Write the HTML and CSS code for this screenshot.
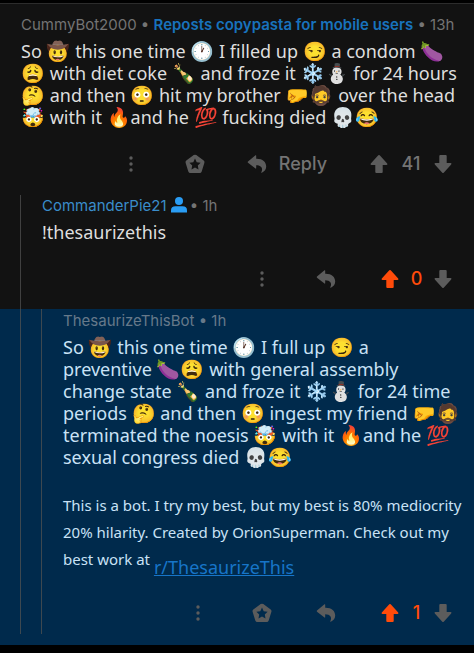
FILE: index.html
```html
<!DOCTYPE html>
<html lang="en">
<head>
<meta charset="utf-8">
<meta name="viewport" content="width=device-width, initial-scale=1">
<title>Comments</title>
<link rel="stylesheet" href="styles.css">
</head>
<body>
<svg class="defs" aria-hidden="true">
  <symbol id="dots" viewBox="0 0 20 20"><circle cx="10" cy="4" r="1.7"/><circle cx="10" cy="10" r="1.7"/><circle cx="10" cy="16" r="1.7"/></symbol>
  <symbol id="award" viewBox="0 0 20 20"><path fill-rule="evenodd" d="M8.7 1.1Q10 .3 11.3 1.1L18.7 6.500Q19.800 7.400 19.400 8.700L16.700 17.400Q16.200 19 14.600 19H5.400Q3.800 19 3.300 17.400L.6 8.700Q.2 7.400 1.300 6.500ZM10 4.600L8.300 8.200L4.400 8.700L7.200 11.500L6.500 15.500L10 13.600L13.500 15.500L12.800 11.500L15.600 8.700L11.700 8.200Z"/></symbol>
  <symbol id="reply" viewBox="0 0 20 20"><path d="M1 7.600L8.500 1.300Q9.200 .8 9.200 1.800V4.800C15.500 4.600 19.200 8 19.200 12.600C19.200 15.300 17.600 17.700 14.800 18.700Q13.900 18.900 14.400 18C16.200 14.300 14.300 11.200 9.200 11.200V14Q9.200 15 8.500 14.500L1 8.700Q.4 8.200 1 7.600Z"/></symbol>
  <symbol id="up" viewBox="0 0 20 20"><path d="M9.300 1.300Q10 .6 10.700 1.300L18.200 9.600Q19 11 17.600 11H13.700V18Q13.700 19 12.700 19H7.300Q6.300 19 6.300 18V11H2.400Q1 11 1.800 9.600Z"/></symbol>
  <symbol id="down" viewBox="0 0 20 20"><path d="M9.300 18.700Q10 19.400 10.700 18.700L18.200 10.400Q19 9 17.600 9H13.700V2Q13.700 1 12.700 1H7.300Q6.300 1 6.300 2V9H2.400Q1 9 1.800 10.400Z"/></symbol>
  <symbol id="person" viewBox="0 0 16 16"><circle cx="8" cy="4" r="4"/><path d="M0 15.500V13.500Q0 9.300 4.500 9.300H11.500Q16 9.300 16 13.500V15.500Z"/></symbol>
</svg>
<main>
  <article class="comment root">
    <div class="content">
      <header class="meta">CummyBot2000 • <b class="flair">Reposts copypasta for mobile users</b> • 13h</header>
      <p class="text">So <i>🤠</i> this one time <i>🕐</i> I filled up <i>😏</i> a condom <i>🍆</i><br><i>😩</i> with diet coke <i>🍾</i> and froze it <i>❄️⛄</i> for 24 hours<br><i>🤔</i> and then <i>😳</i> hit my brother <i>🤛🧔</i> over the head<br><i>🤯</i> with it <i>🔥</i>and he <i>💯</i> fucking died <i>💀😂</i></p>
      <footer class="actions">
        <button type="button" aria-label="More"><svg><use href="#dots"/></svg></button>
        <button type="button" aria-label="Award"><svg><use href="#award"/></svg></button>
        <button type="button" class="labelled"><svg><use href="#reply"/></svg>Reply</button>
        <div class="votes">
          <button type="button" aria-label="Upvote"><svg><use href="#up"/></svg></button>
          <span class="score">41</span>
          <button type="button" aria-label="Downvote"><svg><use href="#down"/></svg></button>
        </div>
      </footer>
    </div>
  </article>

  <article class="comment child">
    <div class="rail"></div>
    <div class="content">
      <header class="meta"><span class="op">CommanderPie21</span> <svg class="person"><use href="#person"/></svg>• 1h</header>
      <p class="text">!thesaurizethis</p>
      <footer class="actions">
        <button type="button" aria-label="More"><svg><use href="#dots"/></svg></button>
        <button type="button" aria-label="Reply"><svg><use href="#reply"/></svg></button>
        <div class="votes voted">
          <button type="button" aria-label="Upvote" aria-pressed="true"><svg><use href="#up"/></svg></button>
          <span class="score">0</span>
          <button type="button" aria-label="Downvote"><svg><use href="#down"/></svg></button>
        </div>
      </footer>
    </div>
  </article>

  <article class="comment highlighted">
    <div class="rail"></div>
    <div class="rail"></div>
    <div class="content">
      <header class="meta">ThesaurizeThisBot • 1h</header>
      <p class="text">So <i>🤠</i> this one time <i>🕐</i> I full up <i>😏</i> a<br>preventive <i>🍆😩</i> with general assembly<br>change state <i>🍾</i> and froze it <i>❄️⛄</i> for 24 time<br>periods <i>🤔</i> and then <i>😳</i> ingest my friend <i>🤛🧔</i><br>terminated the noesis <i>🤯</i> with it <i>🔥</i>and he <i>💯</i><br>sexual congress died <i>💀😂</i></p>
      <p class="note">This is a bot. I try my best, but my best is 80% mediocrity<br>20% hilarity. Created by OrionSuperman. Check out my<br>best work at <a href="#thesaurize">r/ThesaurizeThis</a></p>
      <footer class="actions">
        <button type="button" aria-label="More"><svg><use href="#dots"/></svg></button>
        <button type="button" aria-label="Award"><svg><use href="#award"/></svg></button>
        <button type="button" aria-label="Reply"><svg><use href="#reply"/></svg></button>
        <div class="votes voted">
          <button type="button" aria-label="Upvote" aria-pressed="true"><svg><use href="#up"/></svg></button>
          <span class="score">1</span>
          <button type="button" aria-label="Downvote"><svg><use href="#down"/></svg></button>
        </div>
      </footer>
    </div>
  </article>
</main>
</body>
</html>
```
FILE: styles.css
```css
body {
  margin: 0;
  background: #000;
  color: #dedede;
  font-family: "Noto Sans", sans-serif;
}

.defs {
  display: none;
}

main {
  margin-top: 3px;
  border-top: 1px solid #2c2c2c;
  background: #121212;
}

.comment {
  display: flex;
}

.content {
  flex: 1;
  min-width: 0;
  padding-left: 21px;
}

.rail {
  width: 1px;
  margin-left: 20px;
  background: #404040;
}

.root {
  padding: 11px 0 15px;
}

.child .content {
  padding: 1px 0 14px 21px;
}

.highlighted {
  padding-bottom: 11px;
  background: #002a4c;
  color: #c9e2f6;
}

.highlighted .content {
  padding: 2px 0 5px 21px;
}

.highlighted .rail {
  background: #3d4850;
}

.meta {
  color: #747474;
  font: 15px/20px Inter, sans-serif;
}

.highlighted .meta {
  color: #66798a;
}

.flair {
  color: #1872bd;
  font-weight: 600;
}

.op {
  color: #3a8dca;
}

.person {
  width: 16px;
  height: 16px;
  fill: #2a9df4;
  vertical-align: -2px;
  margin-right: 3px;
}

.text {
  margin: 5px 0 0;
  font-size: 18px;
  line-height: 22px;
}

.text i {
  font-size: 19px;
  font-style: normal;
}

.note {
  margin: 24px 0 0;
  font-size: 15px;
  line-height: 27px;
}

.note a {
  color: #1775c8;
  font-size: 18px;
  line-height: 36px;
  vertical-align: text-top;
}

.actions {
  display: flex;
  justify-content: flex-end;
  align-items: center;
  gap: 40px;
  margin-top: 20px;
  padding-right: 19px;
  color: #5c5c5c;
}

.highlighted .actions {
  margin-top: 12px;
}

.actions button {
  display: flex;
  align-items: center;
  justify-content: center;
  width: 24px;
  height: 32px;
  padding: 0;
  border: 0;
  background: none;
  color: inherit;
}

.actions svg {
  flex: none;
  width: 20px;
  height: 20px;
  fill: currentColor;
}

.actions .labelled {
  gap: 12px;
  width: auto;
  color: #5c5c5c;
  font: 500 18px/32px Inter, sans-serif;
}

.votes {
  display: grid;
  grid-template-columns: 24px 1fr 24px;
  align-items: center;
  min-width: 77px;
}

.labelled + .votes {
  min-width: 88px;
}

.score {
  text-align: center;
  font: 500 18px/32px Inter, sans-serif;
}

.root .score,
.root .labelled {
  color: #747474;
}

.root .labelled svg {
  fill: #5c5c5c;
}

.voted .score,
.voted [aria-pressed="true"] {
  color: #ff4b0a;
}
```
